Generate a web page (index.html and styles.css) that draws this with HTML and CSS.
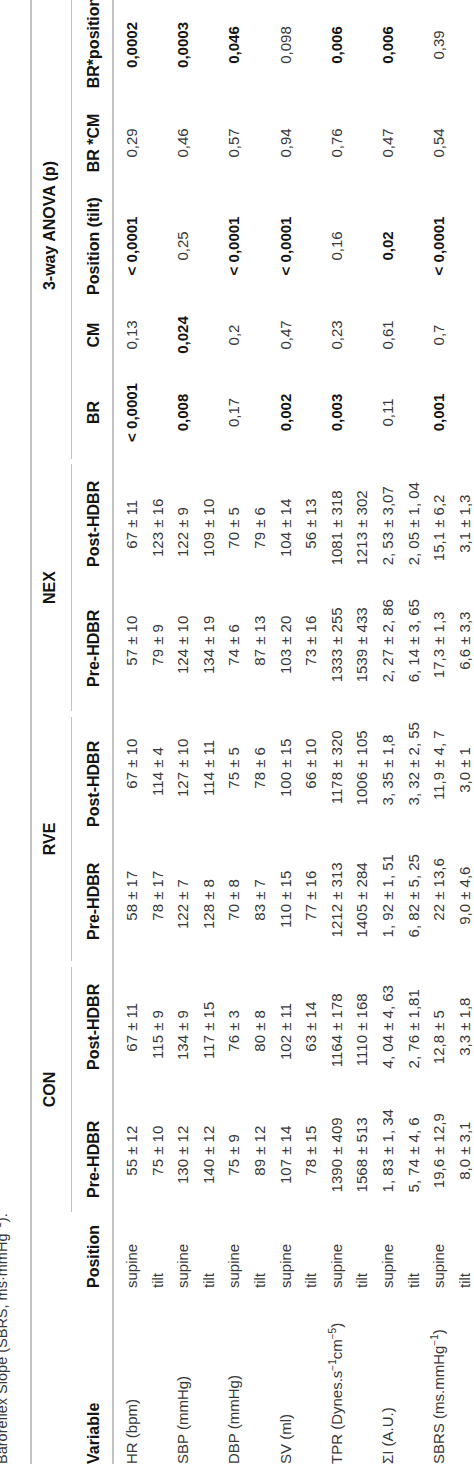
FILE: index.html
```html
<!DOCTYPE html>
<html lang="en">
<head>
<meta charset="utf-8">
<title>Table</title>
<link rel="stylesheet" href="styles.css">
</head>
<body>
<div class="viewport">
  <div class="sheet">
    <p class="caption">Baroreflex Slope (SBRS, ms·mmHg<sup>−1</sup>).</p>
    <table class="tbl">
      <colgroup>
        <col class="w1"><col class="w2"><col class="w3"><col class="w4"><col class="w5"><col class="w6"><col class="w7"><col class="w8"><col class="w9"><col class="w10"><col class="w11"><col class="w12"><col class="w13">
      </colgroup>
      <thead>
        <tr class="groups">
          <th colspan="2"></th>
          <th colspan="2"><div class="grp g-con">CON</div></th>
          <th colspan="2"><div class="grp g-rve">RVE</div></th>
          <th colspan="2"><div class="grp g-nex">NEX</div></th>
          <th colspan="5"><div class="grp g-anova">3-way ANOVA (p)</div></th>
        </tr>
        <tr class="cols">
          <th class="left">Variable</th>
          <th class="left">Position</th>
          <th class="h3">Pre-HDBR</th>
          <th class="h4">Post-HDBR</th>
          <th class="h5">Pre-HDBR</th>
          <th class="h6">Post-HDBR</th>
          <th class="h7">Pre-HDBR</th>
          <th class="h8">Post-HDBR</th>
          <th class="mid">BR</th>
          <th class="mid">CM</th>
          <th class="mid">Position (tilt)</th>
          <th class="mid">BR *CM</th>
          <th class="mid last">BR*position</th>
        </tr>
      </thead>
      <tbody>
        <tr>
          <td>HR (bpm)</td><td>supine</td>
          <td class="v c3"><span class="a">55</span> ± 12</td>
          <td class="v c4"><span class="a">67</span> ± 11</td>
          <td class="v c5"><span class="a">58</span> ± 17</td>
          <td class="v c6"><span class="a">67</span> ± 10</td>
          <td class="v c7"><span class="a">57</span> ± 10</td>
          <td class="v c8"><span class="a">67</span> ± 11</td>
          <td class="mid b">&lt; 0,0001</td><td class="mid">0,13</td><td class="mid b">&lt; 0,0001</td><td class="mid">0,29</td><td class="mid b">0,0002</td>
        </tr>
        <tr>
          <td></td><td>tilt</td>
          <td class="v c3"><span class="a">75</span> ± 10</td>
          <td class="v c4"><span class="a">115</span> ± 9</td>
          <td class="v c5"><span class="a">78</span> ± 17</td>
          <td class="v c6"><span class="a">114</span> ± 4</td>
          <td class="v c7"><span class="a">79</span> ± 9</td>
          <td class="v c8"><span class="a">123</span> ± 16</td>
          <td></td><td></td><td></td><td></td><td></td>
        </tr>
        <tr>
          <td>SBP (mmHg)</td><td>supine</td>
          <td class="v c3"><span class="a">130</span> ± 12</td>
          <td class="v c4"><span class="a">134</span> ± 9</td>
          <td class="v c5"><span class="a">122</span> ± 7</td>
          <td class="v c6"><span class="a">127</span> ± 10</td>
          <td class="v c7"><span class="a">124</span> ± 10</td>
          <td class="v c8"><span class="a">122</span> ± 9</td>
          <td class="mid b">0,008</td><td class="mid b">0,024</td><td class="mid">0,25</td><td class="mid">0,46</td><td class="mid b">0,0003</td>
        </tr>
        <tr>
          <td></td><td>tilt</td>
          <td class="v c3"><span class="a">140</span> ± 12</td>
          <td class="v c4"><span class="a">117</span> ± 15</td>
          <td class="v c5"><span class="a">128</span> ± 8</td>
          <td class="v c6"><span class="a">114</span> ± 11</td>
          <td class="v c7"><span class="a">134</span> ± 19</td>
          <td class="v c8"><span class="a">109</span> ± 10</td>
          <td></td><td></td><td></td><td></td><td></td>
        </tr>
        <tr>
          <td>DBP (mmHg)</td><td>supine</td>
          <td class="v c3"><span class="a">75</span> ± 9</td>
          <td class="v c4"><span class="a">76</span> ± 3</td>
          <td class="v c5"><span class="a">70</span> ± 8</td>
          <td class="v c6"><span class="a">75</span> ± 5</td>
          <td class="v c7"><span class="a">74</span> ± 6</td>
          <td class="v c8"><span class="a">70</span> ± 5</td>
          <td class="mid">0,17</td><td class="mid">0,2</td><td class="mid b">&lt; 0,0001</td><td class="mid">0,57</td><td class="mid b">0,046</td>
        </tr>
        <tr>
          <td></td><td>tilt</td>
          <td class="v c3"><span class="a">89</span> ± 12</td>
          <td class="v c4"><span class="a">80</span> ± 8</td>
          <td class="v c5"><span class="a">83</span> ± 7</td>
          <td class="v c6"><span class="a">78</span> ± 6</td>
          <td class="v c7"><span class="a">87</span> ± 13</td>
          <td class="v c8"><span class="a">79</span> ± 6</td>
          <td></td><td></td><td></td><td></td><td></td>
        </tr>
        <tr>
          <td>SV (ml)</td><td>supine</td>
          <td class="v c3"><span class="a">107</span> ± 14</td>
          <td class="v c4"><span class="a">102</span> ± 11</td>
          <td class="v c5"><span class="a">110</span> ± 15</td>
          <td class="v c6"><span class="a">100</span> ± 15</td>
          <td class="v c7"><span class="a">103</span> ± 20</td>
          <td class="v c8"><span class="a">104</span> ± 14</td>
          <td class="mid b">0,002</td><td class="mid">0,47</td><td class="mid b">&lt; 0,0001</td><td class="mid">0,94</td><td class="mid">0,098</td>
        </tr>
        <tr>
          <td></td><td>tilt</td>
          <td class="v c3"><span class="a">78</span> ± 15</td>
          <td class="v c4"><span class="a">63</span> ± 14</td>
          <td class="v c5"><span class="a">77</span> ± 16</td>
          <td class="v c6"><span class="a">66</span> ± 10</td>
          <td class="v c7"><span class="a">73</span> ± 16</td>
          <td class="v c8"><span class="a">56</span> ± 13</td>
          <td></td><td></td><td></td><td></td><td></td>
        </tr>
        <tr>
          <td>TPR (Dynes.s<sup>−1</sup>cm<sup>−5</sup>)</td><td>supine</td>
          <td class="v c3"><span class="a">1390</span> ± 409</td>
          <td class="v c4"><span class="a">1164</span> ± 178</td>
          <td class="v c5"><span class="a">1212</span> ± 313</td>
          <td class="v c6"><span class="a">1178</span> ± 320</td>
          <td class="v c7"><span class="a">1333</span> ± 255</td>
          <td class="v c8"><span class="a">1081</span> ± 318</td>
          <td class="mid b">0,003</td><td class="mid">0,23</td><td class="mid">0,16</td><td class="mid">0,76</td><td class="mid b">0,006</td>
        </tr>
        <tr>
          <td></td><td>tilt</td>
          <td class="v c3"><span class="a">1568</span> ± 513</td>
          <td class="v c4"><span class="a">1110</span> ± 168</td>
          <td class="v c5"><span class="a">1405</span> ± 284</td>
          <td class="v c6"><span class="a">1006</span> ± 105</td>
          <td class="v c7"><span class="a">1539</span> ± 433</td>
          <td class="v c8"><span class="a">1213</span> ± 302</td>
          <td></td><td></td><td></td><td></td><td></td>
        </tr>
        <tr>
          <td>ΣI (A.U.)</td><td>supine</td>
          <td class="v c3"><span class="a">1, 83</span> ± 1, 34</td>
          <td class="v c4"><span class="a">4, 04</span> ± 4, 63</td>
          <td class="v c5"><span class="a">1, 92</span> ± 1, 51</td>
          <td class="v c6"><span class="a">3, 35</span> ± 1,8</td>
          <td class="v c7"><span class="a">2, 27</span> ± 2, 86</td>
          <td class="v c8"><span class="a">2, 53</span> ± 3,07</td>
          <td class="mid">0,11</td><td class="mid">0,61</td><td class="mid b">0,02</td><td class="mid">0,47</td><td class="mid b">0,006</td>
        </tr>
        <tr>
          <td></td><td>tilt</td>
          <td class="v c3"><span class="a">5, 74</span> ± 4, 6</td>
          <td class="v c4"><span class="a">2, 76</span> ± 1,81</td>
          <td class="v c5"><span class="a">6, 82</span> ± 5, 25</td>
          <td class="v c6"><span class="a">3, 32</span> ± 2, 55</td>
          <td class="v c7"><span class="a">6, 14</span> ± 3, 65</td>
          <td class="v c8"><span class="a">2, 05</span> ± 1, 04</td>
          <td></td><td></td><td></td><td></td><td></td>
        </tr>
        <tr>
          <td>SBRS (ms.mmHg<sup>−1</sup>)</td><td>supine</td>
          <td class="v c3"><span class="a">19,6</span> ± 12,9</td>
          <td class="v c4"><span class="a">12,8</span> ± 5</td>
          <td class="v c5"><span class="a">22</span> ± 13,6</td>
          <td class="v c6"><span class="a">11,9</span> ± 4, 7</td>
          <td class="v c7"><span class="a">17,3</span> ± 1,3</td>
          <td class="v c8"><span class="a">15,1</span> ± 6,2</td>
          <td class="mid b">0,001</td><td class="mid">0,7</td><td class="mid b">&lt; 0,0001</td><td class="mid">0,54</td><td class="mid">0,39</td>
        </tr>
        <tr>
          <td></td><td>tilt</td>
          <td class="v c3"><span class="a">8,0</span> ± 3,1</td>
          <td class="v c4"><span class="a">3,3</span> ± 1,8</td>
          <td class="v c5"><span class="a">9,0</span> ± 4,6</td>
          <td class="v c6"><span class="a">3,0</span> ± 1</td>
          <td class="v c7"><span class="a">6,6</span> ± 3,3</td>
          <td class="v c8"><span class="a">3,1</span> ± 1,3</td>
          <td></td><td></td><td></td><td></td><td></td>
        </tr>
      </tbody>
    </table>
  </div>
</div>
</body>
</html>
```
FILE: styles.css
```css
html, body {
  margin: 0;
  padding: 0;
  background: #ffffff;
}

.viewport {
  width: 474px;
  height: 1464px;
  overflow: hidden;
}

.sheet {
  display: flow-root;
  width: 1472px;
  transform-origin: 0 0;
  transform: translateY(1464px) rotate(-90deg);
  font-family: "Liberation Sans", Arial, Helvetica, sans-serif;
  color: #383838;
}

.caption {
  margin: -6px 0 19px 0;
  font-size: 14.5px;
  line-height: 17px;
  white-space: nowrap;
}

sup {
  font-size: 10px;
  line-height: 0;
  vertical-align: 6px;
}

.tbl {
  width: 1472px;
  table-layout: fixed;
  border-spacing: 0;
  font-size: 15px;
}

.w1 { width: 176px; }
.w2 { width: 76px; }
.w3 { width: 126px; }
.w4 { width: 125px; }
.w5 { width: 122px; }
.w6 { width: 125px; }
.w7 { width: 127px; }
.w8 { width: 128px; }
.w9 { width: 93px; }
.w10 { width: 62px; }
.w11 { width: 116px; }
.w12 { width: 90px; }
.w13 { width: 106px; }

th {
  font-weight: bold;
  font-size: 16px;
  color: #141414;
  white-space: nowrap;
  text-align: left;
}

.groups th {
  border-top: 2px solid #c2c2c2;
  padding: 0;
  vertical-align: top;
}

.grp {
  padding: 9px 0 12px 0;
  line-height: 18px;
  text-align: center;
  border-bottom: 1.5px solid #c2c2c2;
}

.g-con { margin: 0 6px 0 0; }
.g-rve { margin: 0 3px 0 0; }
.g-nex { margin: 0 5px 0 3px; }
.g-anova { margin: 0; }

.cols th {
  padding: 13px 0 9px 0;
  line-height: 18px;
  border-bottom: 2px solid #c2c2c2;
}

.cols th.mid { text-align: center; }
.cols th.last { padding-left: 5px; }

.h3 { padding-left: 14px !important; }
.h4 { padding-left: 16px !important; }
.h5 { padding-left: 21px !important; }
.h6 { padding-left: 12px !important; }
.h7 { padding-left: 27px !important; }
.h8 { padding-left: 20px !important; }

td {
  padding: 0;
  line-height: 25.6px;
  white-space: nowrap;
  vertical-align: top;
}

tbody tr:first-child td {
  padding-top: 5px;
}

td.mid { text-align: center; }

td.b {
  font-weight: bold;
  color: #141414;
}

.a {
  display: inline-block;
  width: 36px;
  text-align: right;
}

.c3 { padding-left: 17px; }
.c4 { padding-left: 15px; }
.c5 { padding-left: 21px; }
.c6 { padding-left: 31px; }
.c7 { padding-left: 29px; }
.c8 { padding-left: 19px; }
```
